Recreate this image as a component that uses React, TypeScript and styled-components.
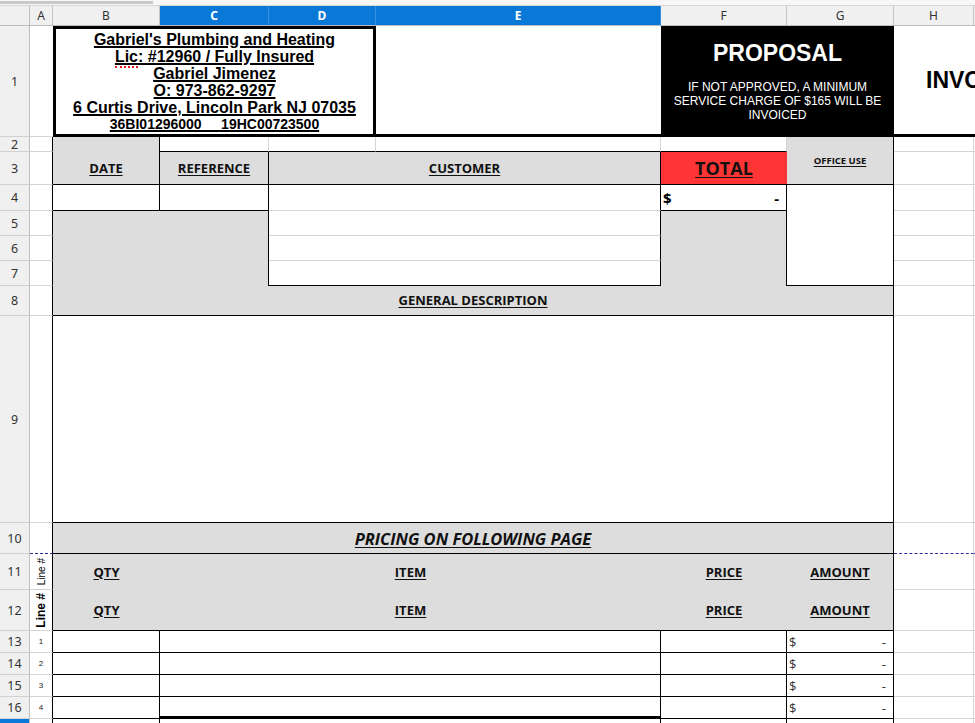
import styled, { createGlobalStyle } from "styled-components";

const GlobalStyle = createGlobalStyle`
  html, body { margin: 0; padding: 0; background: #fff; }
  body { font-family: "Open Sans", "Liberation Sans", sans-serif; overflow: hidden; }
  * { box-sizing: border-box; }
`;

// border presets
const GRID = "1px solid #d4d4d4";
const LINE = "1px solid #000";
const THICK = "3px solid #000";
const NONE = "none";
const BREAK = "1px dashed #2b2b9e";
const GRAY = "#dddddd";
const RED = "#ff3535";

// "I" only peeks in at the right edge, its letter is off screen
const COLS = ["A", "B", "C", "D", "E", "F", "G", "H", ""];
const SELECTED_COLS = ["C", "D", "E"];
const ROW_HEIGHTS = [111, 15, 33, 26, 25, 25, 25, 30, 207, 31, 36, 41, 22, 22, 22, 22, 22];
const LAST_ROW = ROW_HEIGHTS.length;

// sheet row n sits on grid row n + 1 (grid row 1 is the column header)
const r = (n: number) => n + 1;
// grid columns: 1 row header, 2 A, 3 B ... 10 I
const B = 3, C = 4, D = 5, E = 6, F = 7, G = 8, H = 9, I = 10;

const App = () => {
  return (
    <>
      <GlobalStyle />
      <Page>
        <TopStrip>
          <Thumb />
        </TopStrip>
        <Sheet>
          <Corner />
          {COLS.map((c, i) => (
            <ColHead key={i} $sel={SELECTED_COLS.includes(c)}>
              {c}
            </ColHead>
          ))}
          {ROW_HEIGHTS.map((_, i) => (
            <RowHead key={i} $row={r(i + 1)} $sel={i + 1 === LAST_ROW}>
              {i + 1 < LAST_ROW ? i + 1 : null}
            </RowHead>
          ))}

          {/* column A */}
          <Cell $col={2} $row={r(1)} $r={NONE} />
          {[2, 3, 4, 5, 6, 7, 8, 9].map((n) => (
            <Cell key={n} $col={2} $row={r(n)} $r={LINE} />
          ))}
          <Cell $col={2} $row={r(10)} $r={LINE} $b={BREAK} />
          <Cell $col={2} $row={r(11)} $r={LINE}>
            <Vertical>Line #</Vertical>
          </Cell>
          <Cell $col={2} $row={r(12)} $r={LINE}>
            <Vertical $bold>Line #</Vertical>
          </Cell>
          {[1, 2, 3, 4].map((n) => (
            <Cell key={n} $col={2} $row={r(12 + n)} $r={LINE}>
              <LineNo>{n}</LineNo>
            </Cell>
          ))}
          <Cell $col={2} $row={r(17)} $r={LINE} />

          {/* row 1 */}
          <Cell $col={B} $cspan={3} $row={r(1)} $t={THICK} $r={THICK} $b={THICK} $l={THICK}>
            <Letterhead>
              <AddrLine>Gabriel's Plumbing and Heating</AddrLine>
              <AddrLine>
                <Squiggle>Lic</Squiggle>: #12960 / Fully Insured
              </AddrLine>
              <AddrLine>Gabriel Jimenez</AddrLine>
              <AddrLine>O: 973-862-9297</AddrLine>
              <AddrLine>6 Curtis Drive, Lincoln Park NJ 07035</AddrLine>
              <AddrLine $small>36BI01296000&nbsp;&nbsp;&nbsp;&nbsp;&nbsp;19HC00723500</AddrLine>
            </Letterhead>
          </Cell>
          <Cell $col={E} $row={r(1)} $r={NONE} $b={THICK} />
          <Cell $col={F} $cspan={2} $row={r(1)} $bg="#000" $r={NONE} $b={THICK}>
            <Proposal>
              <ProposalTitle>PROPOSAL</ProposalTitle>
              <ProposalNote>
                IF NOT APPROVED, A MINIMUM
                <br />
                SERVICE CHARGE OF $165 WILL BE
                <br />
                INVOICED
              </ProposalNote>
            </Proposal>
          </Cell>
          <Cell $col={H} $cspan={2} $row={r(1)} $r={NONE} $b={THICK} $justify="flex-start">
            <Invoice>INVOICE</Invoice>
          </Cell>

          {/* rows 2-3: headings */}
          <Cell $col={B} $row={r(2)} $rspan={2} $bg={GRAY} $r={LINE} $b={LINE} $align="flex-end">
            <Head>DATE</Head>
          </Cell>
          <Cell $col={C} $row={r(2)} $b={LINE} />
          <Cell $col={D} $row={r(2)} $b={LINE} />
          <Cell $col={E} $row={r(2)} $b={LINE} />
          <Cell $col={F} $row={r(2)} $b={LINE} />
          <Cell $col={G} $row={r(2)} $rspan={2} $bg={GRAY} $r={LINE} $b={LINE}>
            <Head $size={9.5}>OFFICE USE</Head>
          </Cell>
          <Cell $col={C} $row={r(3)} $bg={GRAY} $r={LINE} $b={LINE}>
            <Head>REFERENCE</Head>
          </Cell>
          <Cell $col={D} $cspan={2} $row={r(3)} $bg={GRAY} $r={LINE} $b={LINE}>
            <Head>CUSTOMER</Head>
          </Cell>
          <Cell $col={F} $row={r(3)} $bg={RED} $r={NONE} $b={LINE}>
            <Head $size={18}>TOTAL</Head>
          </Cell>

          {/* rows 4-7 */}
          <Cell $col={B} $row={r(4)} $r={LINE} $b={LINE} />
          <Cell $col={C} $row={r(4)} $r={LINE} $b={LINE} />
          <Cell $col={D} $cspan={2} $row={r(4)} $r={LINE} />
          <Cell $col={F} $row={r(4)} $r={LINE} $b={LINE}>
            <Money $bold>
              <span>$</span>
              <span>-</span>
            </Money>
          </Cell>
          <Cell $col={G} $row={r(4)} $rspan={4} $r={LINE} $b={LINE} />
          <Cell $col={B} $cspan={2} $row={r(5)} $rspan={3} $bg={GRAY} $r={LINE} $b={NONE} />
          <Cell $col={D} $cspan={2} $row={r(5)} $r={LINE} />
          <Cell $col={D} $cspan={2} $row={r(6)} $r={LINE} />
          <Cell $col={D} $cspan={2} $row={r(7)} $r={LINE} $b={LINE} />
          <Cell $col={F} $row={r(5)} $rspan={3} $bg={GRAY} $r={LINE} $b={NONE} />

          {/* rows 8-10 */}
          <Cell $col={B} $cspan={6} $row={r(8)} $bg={GRAY} $r={LINE} $b={LINE}>
            <Head>GENERAL DESCRIPTION</Head>
          </Cell>
          <Cell $col={B} $cspan={6} $row={r(9)} $r={LINE} $b={LINE} />
          <Cell $col={B} $cspan={6} $row={r(10)} $bg={GRAY} $r={LINE} $b={LINE}>
            <Head $size={16.5} $italic>
              PRICING ON FOLLOWING PAGE
            </Head>
          </Cell>

          {/* rows 11-12: pricing headings */}
          {[11, 12].map((n) => (
            <PricingHead key={n} n={n} />
          ))}

          {/* rows 13-17: pricing lines */}
          {[13, 14, 15, 16, 17].map((n) => (
            <PricingRow key={n} n={n} />
          ))}

          {/* columns H and I */}
          {ROW_HEIGHTS.map((_, i) => (i === 0 ? null : <SideCells key={i} n={i + 1} />))}
        </Sheet>
      </Page>
    </>
  );
};

const PricingHead = ({ n }: { n: number }) => {
  const bottom = n === 12 ? LINE : NONE;
  return (
    <>
      <Cell $col={B} $row={r(n)} $bg={GRAY} $r={NONE} $b={bottom}>
        <Head>QTY</Head>
      </Cell>
      <Cell $col={C} $cspan={3} $row={r(n)} $bg={GRAY} $r={NONE} $b={bottom}>
        <Head>ITEM</Head>
      </Cell>
      <Cell $col={F} $row={r(n)} $bg={GRAY} $r={NONE} $b={bottom}>
        <Head>PRICE</Head>
      </Cell>
      <Cell $col={G} $row={r(n)} $bg={GRAY} $r={LINE} $b={bottom}>
        <Head>AMOUNT</Head>
      </Cell>
    </>
  );
};

const PricingRow = ({ n }: { n: number }) => (
  <>
    <Cell $col={B} $row={r(n)} $r={LINE} $b={LINE} />
    <Cell $col={C} $cspan={3} $row={r(n)} $r={LINE} $b={n === 16 ? THICK : LINE} />
    <Cell $col={F} $row={r(n)} $r={LINE} $b={LINE} />
    <Cell $col={G} $row={r(n)} $r={LINE} $b={LINE}>
      {n < 17 && (
        <Money>
          <span>$</span>
          <span>-</span>
        </Money>
      )}
    </Cell>
  </>
);

const SideCells = ({ n }: { n: number }) => (
  <>
    <Cell $col={H} $row={r(n)} $b={n === 10 ? BREAK : GRID} />
    <Cell $col={I} $row={r(n)} $b={n === 10 ? BREAK : GRID} />
  </>
);

export default App;

const Page = styled.div`
  width: 975px;
  height: 723px;
  overflow: hidden;
  background: #fff;
`;

const TopStrip = styled.div`
  height: 6px;
  background: #f7f7f7;
  border-bottom: 1px solid #d6d6d6;
  padding-top: 1px;
`;

const Thumb = styled.div`
  width: 153px;
  height: 3px;
  background: #c9c9c9;
`;

const Sheet = styled.div`
  display: grid;
  grid-template-columns: 30px 23px 107px 109px 107px 285px 126px 107px 80px 60px;
  grid-template-rows: 20px ${ROW_HEIGHTS.map((h) => `${h}px`).join(" ")};
  width: 1034px;
`;

const Corner = styled.div`
  grid-column: 1;
  grid-row: 1;
  background: #f0f0f0;
  border-right: 1px solid #bdbdbd;
  border-bottom: 1px solid #bdbdbd;
`;

const ColHead = styled.div<{ $sel: boolean }>`
  grid-row: 1;
  display: flex;
  align-items: center;
  justify-content: center;
  font-family: "Noto Sans", "Open Sans", sans-serif;
  font-size: 12px;
  font-weight: ${(p) => (p.$sel ? 700 : 400)};
  color: ${(p) => (p.$sel ? "#fff" : "#333")};
  background: ${(p) => (p.$sel ? "#0a78d7" : "#f0f0f0")};
  border-right: 1px solid ${(p) => (p.$sel ? "#3a8fd9" : "#c4c4c4")};
  border-bottom: 1px solid #bdbdbd;
`;

const RowHead = styled.div<{ $row: number; $sel: boolean }>`
  grid-column: 1;
  grid-row: ${(p) => p.$row};
  display: flex;
  align-items: center;
  justify-content: center;
  font-family: "Noto Sans", "Open Sans", sans-serif;
  font-size: 12.5px;
  color: ${(p) => (p.$sel ? "#fff" : "#333")};
  background: ${(p) => (p.$sel ? "#0a78d7" : "#f0f0f0")};
  border-right: 1px solid #bdbdbd;
  border-bottom: 1px solid #d0d0d0;
`;

type CellProps = {
  $col: number;
  $row: number;
  $cspan?: number;
  $rspan?: number;
  $bg?: string;
  $t?: string;
  $r?: string;
  $b?: string;
  $l?: string;
  $justify?: string;
  $align?: string;
};

const Cell = styled.div<CellProps>`
  grid-column: ${(p) => p.$col} / span ${(p) => p.$cspan ?? 1};
  grid-row: ${(p) => p.$row} / span ${(p) => p.$rspan ?? 1};
  background: ${(p) => p.$bg ?? "#fff"};
  border-top: ${(p) => p.$t ?? NONE};
  border-right: ${(p) => p.$r ?? GRID};
  border-bottom: ${(p) => p.$b ?? GRID};
  border-left: ${(p) => p.$l ?? NONE};
  display: flex;
  justify-content: ${(p) => p.$justify ?? "center"};
  align-items: ${(p) => p.$align ?? "center"};
  overflow: hidden;
  min-width: 0;
`;

const Letterhead = styled.div`
  display: flex;
  flex-direction: column;
  align-items: center;
  font-family: "Liberation Sans", Arial, sans-serif;
  font-weight: 700;
  color: #000;
`;

const AddrLine = styled.div<{ $small?: boolean }>`
  font-size: ${(p) => (p.$small ? 14 : 16)}px;
  line-height: 17px;
  text-decoration: underline;
  text-decoration-thickness: 1.5px;
  text-underline-offset: 1px;
  white-space: nowrap;
`;

const Squiggle = styled.span`
  position: relative;
  &::after {
    content: "";
    position: absolute;
    left: 0;
    right: 0;
    bottom: -3px;
    border-bottom: 2px dotted #e02020;
  }
`;

const Proposal = styled.div`
  display: flex;
  flex-direction: column;
  align-items: center;
  gap: 13px;
  color: #fff;
  font-family: "Liberation Sans", Arial, sans-serif;
  text-align: center;
`;

const ProposalTitle = styled.div`
  font-size: 23px;
  font-weight: 700;
  line-height: 28px;
`;

const ProposalNote = styled.div`
  font-size: 12px;
  line-height: 14px;
`;

const Invoice = styled.div`
  padding-left: 32px;
  font-family: "Liberation Sans", Arial, sans-serif;
  font-size: 23px;
  font-weight: 700;
  color: #000;
  white-space: nowrap;
`;

const Head = styled.span<{ $size?: number; $italic?: boolean }>`
  font-family: "Open Sans", "DejaVu Sans", sans-serif;
  font-weight: 700;
  font-size: ${(p) => p.$size ?? 13}px;
  font-style: ${(p) => (p.$italic ? "italic" : "normal")};
  line-height: 31px;
  color: #111;
  text-decoration: underline;
  text-decoration-thickness: 1px;
  text-underline-offset: 2px;
  white-space: nowrap;
`;

const Money = styled.div<{ $bold?: boolean }>`
  width: 100%;
  display: flex;
  justify-content: space-between;
  padding: 0 7px 0 2px;
  font-family: "Open Sans", "DejaVu Sans", sans-serif;
  font-size: ${(p) => (p.$bold ? 15 : 13)}px;
  font-weight: ${(p) => (p.$bold ? 700 : 400)};
  color: ${(p) => (p.$bold ? "#000" : "#333")};
`;

const Vertical = styled.div<{ $bold?: boolean }>`
  writing-mode: vertical-rl;
  transform: rotate(180deg);
  font-family: "Liberation Sans", Arial, sans-serif;
  font-size: ${(p) => (p.$bold ? 12 : 10)}px;
  font-weight: ${(p) => (p.$bold ? 700 : 400)};
  color: #000;
  white-space: nowrap;
`;

const LineNo = styled.span`
  font-family: "Liberation Sans", Arial, sans-serif;
  font-size: 8px;
  color: #222;
`;
